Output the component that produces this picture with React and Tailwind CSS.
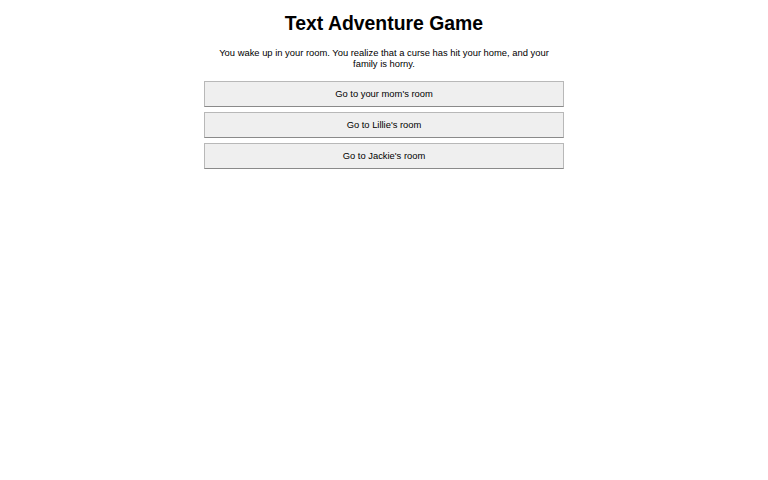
export default function App() {
  const choices = ["Go to your mom's room", "Go to Lillie's room", "Go to Jackie's room"];

  return (
    <div className="min-h-[480px] bg-white font-['Liberation_Sans',Arial,sans-serif] text-black">
      <div className="mx-auto flex w-[360px] flex-col items-center pt-[11px]">
        <h1 className="text-[19.4px] font-bold leading-[24px]">Text Adventure Game</h1>
        <p className="mt-[12px] w-[350px] text-center text-[9.4px] leading-[11px]">
          You wake up in your room. You realize that a curse has hit your home, and your family is horny.
        </p>
        <div className="mt-[12px] flex w-full flex-col gap-[5px]">
          {choices.map((c) => (
            <button
              key={c}
              className="h-[26px] w-full border border-[#b8b8b8] border-b-[#8a8a8a] bg-[#efefef] text-[9.4px] text-black"
            >
              {c}
            </button>
          ))}
        </div>
      </div>
    </div>
  );
}
